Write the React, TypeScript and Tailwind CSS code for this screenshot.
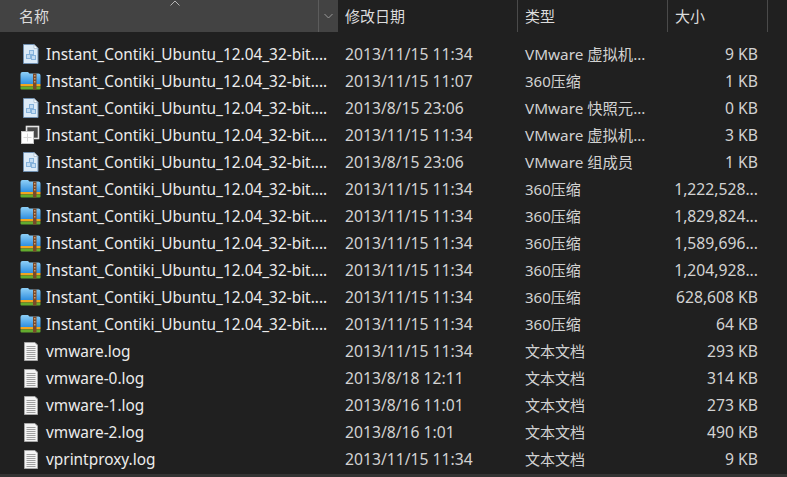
import React from 'react';

type IconKind = 'doc' | 'zip' | 'multi' | 'log';

interface FileRow {
  name: string;
  date: string;
  type: string;
  size: string;
  icon: IconKind;
}

const LONG_NAME = 'Instant_Contiki_Ubuntu_12.04_32-bit....';

const rows: FileRow[] = [
  { name: LONG_NAME, date: '2013/11/15 11:34', type: 'VMware 虚拟机...', size: '9 KB', icon: 'doc' },
  { name: LONG_NAME, date: '2013/11/15 11:07', type: '360压缩', size: '1 KB', icon: 'zip' },
  { name: LONG_NAME, date: '2013/8/15 23:06', type: 'VMware 快照元...', size: '0 KB', icon: 'doc' },
  { name: LONG_NAME, date: '2013/11/15 11:34', type: 'VMware 虚拟机...', size: '3 KB', icon: 'multi' },
  { name: LONG_NAME, date: '2013/8/15 23:06', type: 'VMware 组成员', size: '1 KB', icon: 'doc' },
  { name: LONG_NAME, date: '2013/11/15 11:34', type: '360压缩', size: '1,222,528...', icon: 'zip' },
  { name: LONG_NAME, date: '2013/11/15 11:34', type: '360压缩', size: '1,829,824...', icon: 'zip' },
  { name: LONG_NAME, date: '2013/11/15 11:34', type: '360压缩', size: '1,589,696...', icon: 'zip' },
  { name: LONG_NAME, date: '2013/11/15 11:34', type: '360压缩', size: '1,204,928...', icon: 'zip' },
  { name: LONG_NAME, date: '2013/11/15 11:34', type: '360压缩', size: '628,608 KB', icon: 'zip' },
  { name: LONG_NAME, date: '2013/11/15 11:34', type: '360压缩', size: '64 KB', icon: 'zip' },
  { name: 'vmware.log', date: '2013/11/15 11:34', type: '文本文档', size: '293 KB', icon: 'log' },
  { name: 'vmware-0.log', date: '2013/8/18 12:11', type: '文本文档', size: '314 KB', icon: 'log' },
  { name: 'vmware-1.log', date: '2013/8/16 11:01', type: '文本文档', size: '273 KB', icon: 'log' },
  { name: 'vmware-2.log', date: '2013/8/16 1:01', type: '文本文档', size: '490 KB', icon: 'log' },
  { name: 'vprintproxy.log', date: '2013/11/15 11:34', type: '文本文档', size: '9 KB', icon: 'log' },
];

const FileIcon: React.FC<{ kind: IconKind }> = ({ kind }) => {
  if (kind === 'zip') {
    return (
      <svg width="21" height="20" viewBox="0 0 21 20">
        <defs>
          <linearGradient id="folderBlue" x1="0" y1="0" x2="0" y2="1">
            <stop offset="0" stopColor="#8fd0f7" />
            <stop offset="1" stopColor="#2f8fe0" />
          </linearGradient>
        </defs>
        <path d="M0.5 3 Q0.5 1 2.5 1 H8 L9.5 2.5 H18.5 Q20.5 2.5 20.5 4.5 V13 H0.5 Z" fill="url(#folderBlue)" />
        <rect x="0.5" y="13" width="20" height="2.5" fill="#f2a51f" />
        <rect x="0.5" y="15.5" width="20" height="3" rx="1" fill="#63ab2e" />
        <rect x="13" y="2.5" width="3.5" height="16" fill="#7a4a2a" />
        <rect x="14" y="4" width="1.5" height="1.5" fill="#c89a70" />
        <rect x="14" y="7" width="1.5" height="1.5" fill="#c89a70" />
        <rect x="14" y="10" width="1.5" height="1.5" fill="#c89a70" />
      </svg>
    );
  }
  if (kind === 'multi') {
    return (
      <svg width="21" height="20" viewBox="0 0 21 20">
        <rect x="6.5" y="1.5" width="12" height="12" fill="#4a4a4a" stroke="#e4e4e4" strokeWidth="1.6" />
        <rect x="1.5" y="6.5" width="12" height="12" fill="#ffffff" stroke="#c4c4c4" />
        <path d="M7.5 8.5 V16.5 M3.5 12.5 H11.5" stroke="#d8d8d8" />
      </svg>
    );
  }
  if (kind === 'log') {
    return (
      <svg width="21" height="20" viewBox="0 0 21 20">
        <path d="M4.5 1.5 H15 L17.5 4 V19.5 H4.5 Z" fill="#f4f4f4" stroke="#a6a6a6" />
        <path
          d="M6.5 5.5 H15.5 M6.5 7.5 H15.5 M6.5 9.5 H15.5 M6.5 11.5 H15.5 M6.5 13.5 H15.5 M6.5 15.5 H15.5 M6.5 17.5 H15.5"
          stroke="#a0a0a0"
        />
      </svg>
    );
  }
  return (
    <svg width="21" height="20" viewBox="0 0 21 20">
      <path d="M3.5 0.5 H14 L18 4.5 V19.5 H3.5 Z" fill="#dcebf8" stroke="#6f8fb0" />
      <path d="M14 0.5 V4.5 H18 Z" fill="#ffffff" stroke="#9fb4c8" strokeWidth="0.7" />
      <rect x="9.5" y="6.5" width="4" height="4" fill="#c3dcf2" stroke="#86b3dc" />
      <rect x="6.5" y="10.5" width="4" height="4" fill="#c3dcf2" stroke="#86b3dc" />
      <rect x="11.5" y="11.5" width="4" height="4" fill="#c3dcf2" stroke="#86b3dc" />
    </svg>
  );
};

const HeaderCell: React.FC<{ label: string; width: string }> = ({ label, width }) => (
  <div className={`${width} h-full flex items-center pl-[7px] border-r border-[#4a4a4a] text-[15px] text-[#dcdcdc]`}>
    {label}
  </div>
);

export default function App() {
  return (
    <div
      className="w-[787px] h-[477px] overflow-hidden flex flex-col bg-[#202020] text-[#ececec] text-[15.4px]"
      style={{ fontFamily: '"Noto Sans", "Noto Sans CJK SC", sans-serif' }}
    >
      <div className="relative h-[32px] flex shrink-0">
        <div className="relative w-[318px] h-full flex items-center pl-[19px] bg-[#434343] text-[15px] text-[#dcdcdc]">
          名称
          <svg className="absolute left-[170px] top-0" width="10" height="6" viewBox="0 0 10 6">
            <path d="M0.5 5.5 L5 1 L9.5 5.5" fill="none" stroke="#b5b5b5" />
          </svg>
        </div>
        <div className="w-[20px] h-full flex items-center justify-center bg-[#434343] border-l border-[#5c5c5c]">
          <svg width="9" height="6" viewBox="0 0 9 6">
            <path d="M0.5 1 L4.5 5 L8.5 1" fill="none" stroke="#9a9a9a" />
          </svg>
        </div>
        <HeaderCell label="修改日期" width="w-[180px]" />
        <HeaderCell label="类型" width="w-[150px]" />
        <HeaderCell label="大小" width="w-[100px]" />
      </div>

      <div className="flex-1 pt-[9px]">
        {rows.map((row, i) => (
          <div key={i} className="h-[27px] flex items-center whitespace-nowrap">
            <div className="w-[338px] flex items-center pl-[20px] gap-[5px]">
              <FileIcon kind={row.icon} />
              <span>{row.name}</span>
            </div>
            <div className="w-[180px] pl-[7px] text-[15.7px] text-[#d2d2d2]">{row.date}</div>
            <div className={`w-[150px] pl-[7px] text-[#d2d2d2] ${row.type.startsWith('VMware') ? 'text-[15.3px]' : 'text-[15px]'}`}>
              {row.type}
            </div>
            <div className="w-[90px] text-right text-[15.7px] text-[#d2d2d2]">{row.size}</div>
          </div>
        ))}
      </div>

      <div className="h-[3px] shrink-0 bg-[#333333]" />
    </div>
  );
}
